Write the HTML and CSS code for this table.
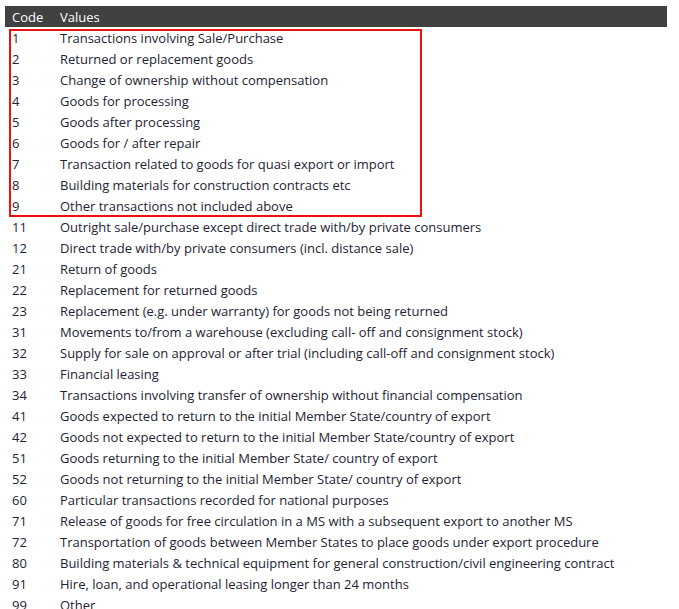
FILE: index.html
```html
<!DOCTYPE html>
<html>
<head>
<meta charset="utf-8">
<link rel="stylesheet" href="styles.css">
</head>
<body>
<div class="table">
  <div class="row head"><span class="code">Code</span><span class="val">Values</span></div>
  <div class="group">
    <div class="row"><span class="code">1</span><span class="val">Transactions involving Sale/Purchase</span></div>
    <div class="row"><span class="code">2</span><span class="val">Returned or replacement goods</span></div>
    <div class="row"><span class="code">3</span><span class="val">Change of ownership without compensation</span></div>
    <div class="row"><span class="code">4</span><span class="val">Goods for processing</span></div>
    <div class="row"><span class="code">5</span><span class="val">Goods after processing</span></div>
    <div class="row"><span class="code">6</span><span class="val">Goods for / after repair</span></div>
    <div class="row"><span class="code">7</span><span class="val">Transaction related to goods for quasi export or import</span></div>
    <div class="row"><span class="code">8</span><span class="val">Building materials for construction contracts etc</span></div>
    <div class="row"><span class="code">9</span><span class="val">Other transactions not included above</span></div>
  </div>
  <div class="row"><span class="code">11</span><span class="val">Outright sale/purchase except direct trade with/by private consumers</span></div>
  <div class="row"><span class="code">12</span><span class="val">Direct trade with/by private consumers (incl. distance sale)</span></div>
  <div class="row"><span class="code">21</span><span class="val">Return of goods</span></div>
  <div class="row"><span class="code">22</span><span class="val">Replacement for returned goods</span></div>
  <div class="row"><span class="code">23</span><span class="val">Replacement (e.g. under warranty) for goods not being returned</span></div>
  <div class="row"><span class="code">31</span><span class="val">Movements to/from a warehouse (excluding call- off and consignment stock)</span></div>
  <div class="row"><span class="code">32</span><span class="val">Supply for sale on approval or after trial (including call-off and consignment stock)</span></div>
  <div class="row"><span class="code">33</span><span class="val">Financial leasing</span></div>
  <div class="row"><span class="code">34</span><span class="val">Transactions involving transfer of ownership without financial compensation</span></div>
  <div class="row"><span class="code">41</span><span class="val">Goods expected to return to the initial Member State/country of export</span></div>
  <div class="row"><span class="code">42</span><span class="val">Goods not expected to return to the initial Member State/country of export</span></div>
  <div class="row"><span class="code">51</span><span class="val">Goods returning to the initial Member State/ country of export</span></div>
  <div class="row"><span class="code">52</span><span class="val">Goods not returning to the initial Member State/ country of export</span></div>
  <div class="row"><span class="code">60</span><span class="val">Particular transactions recorded for national purposes</span></div>
  <div class="row"><span class="code">71</span><span class="val">Release of goods for free circulation in a MS with a subsequent export to another MS</span></div>
  <div class="row"><span class="code">72</span><span class="val">Transportation of goods between Member States to place goods under export procedure</span></div>
  <div class="row"><span class="code">80</span><span class="val">Building materials &amp; technical equipment for general construction/civil engineering contract</span></div>
  <div class="row"><span class="code">91</span><span class="val">Hire, loan, and operational leasing longer than 24 months</span></div>
  <div class="row"><span class="code">99</span><span class="val">Other</span></div>
</div>
</body>
</html>
```
FILE: styles.css
```css
html, body {
  margin: 0;
  background: #ffffff;
}
body {
  padding: 6px 12px 0 5px;
  font-family: "Open Sans", "Noto Sans", sans-serif;
  font-size: 13px;
  color: #1f2333;
}
.table {
  width: 662px;
}
.row {
  display: flex;
  height: 21px;
  padding-bottom: 2px;
  box-sizing: border-box;
  align-items: center;
  white-space: nowrap;
}
.row .code {
  width: 55px;
  padding-left: 7px;
  box-sizing: border-box;
  flex: none;
}
.row .val {
  flex: 1;
}
.head {
  background: #414141;
  color: #ffffff;
  margin-bottom: 1px;
  padding-bottom: 0;
}
.group {
  position: relative;
}
.group::after {
  content: "";
  position: absolute;
  left: 4px;
  top: 1px;
  width: 413px;
  bottom: 0;
  border: 2px solid #ee1111;
  box-sizing: border-box;
  pointer-events: none;
}
```
